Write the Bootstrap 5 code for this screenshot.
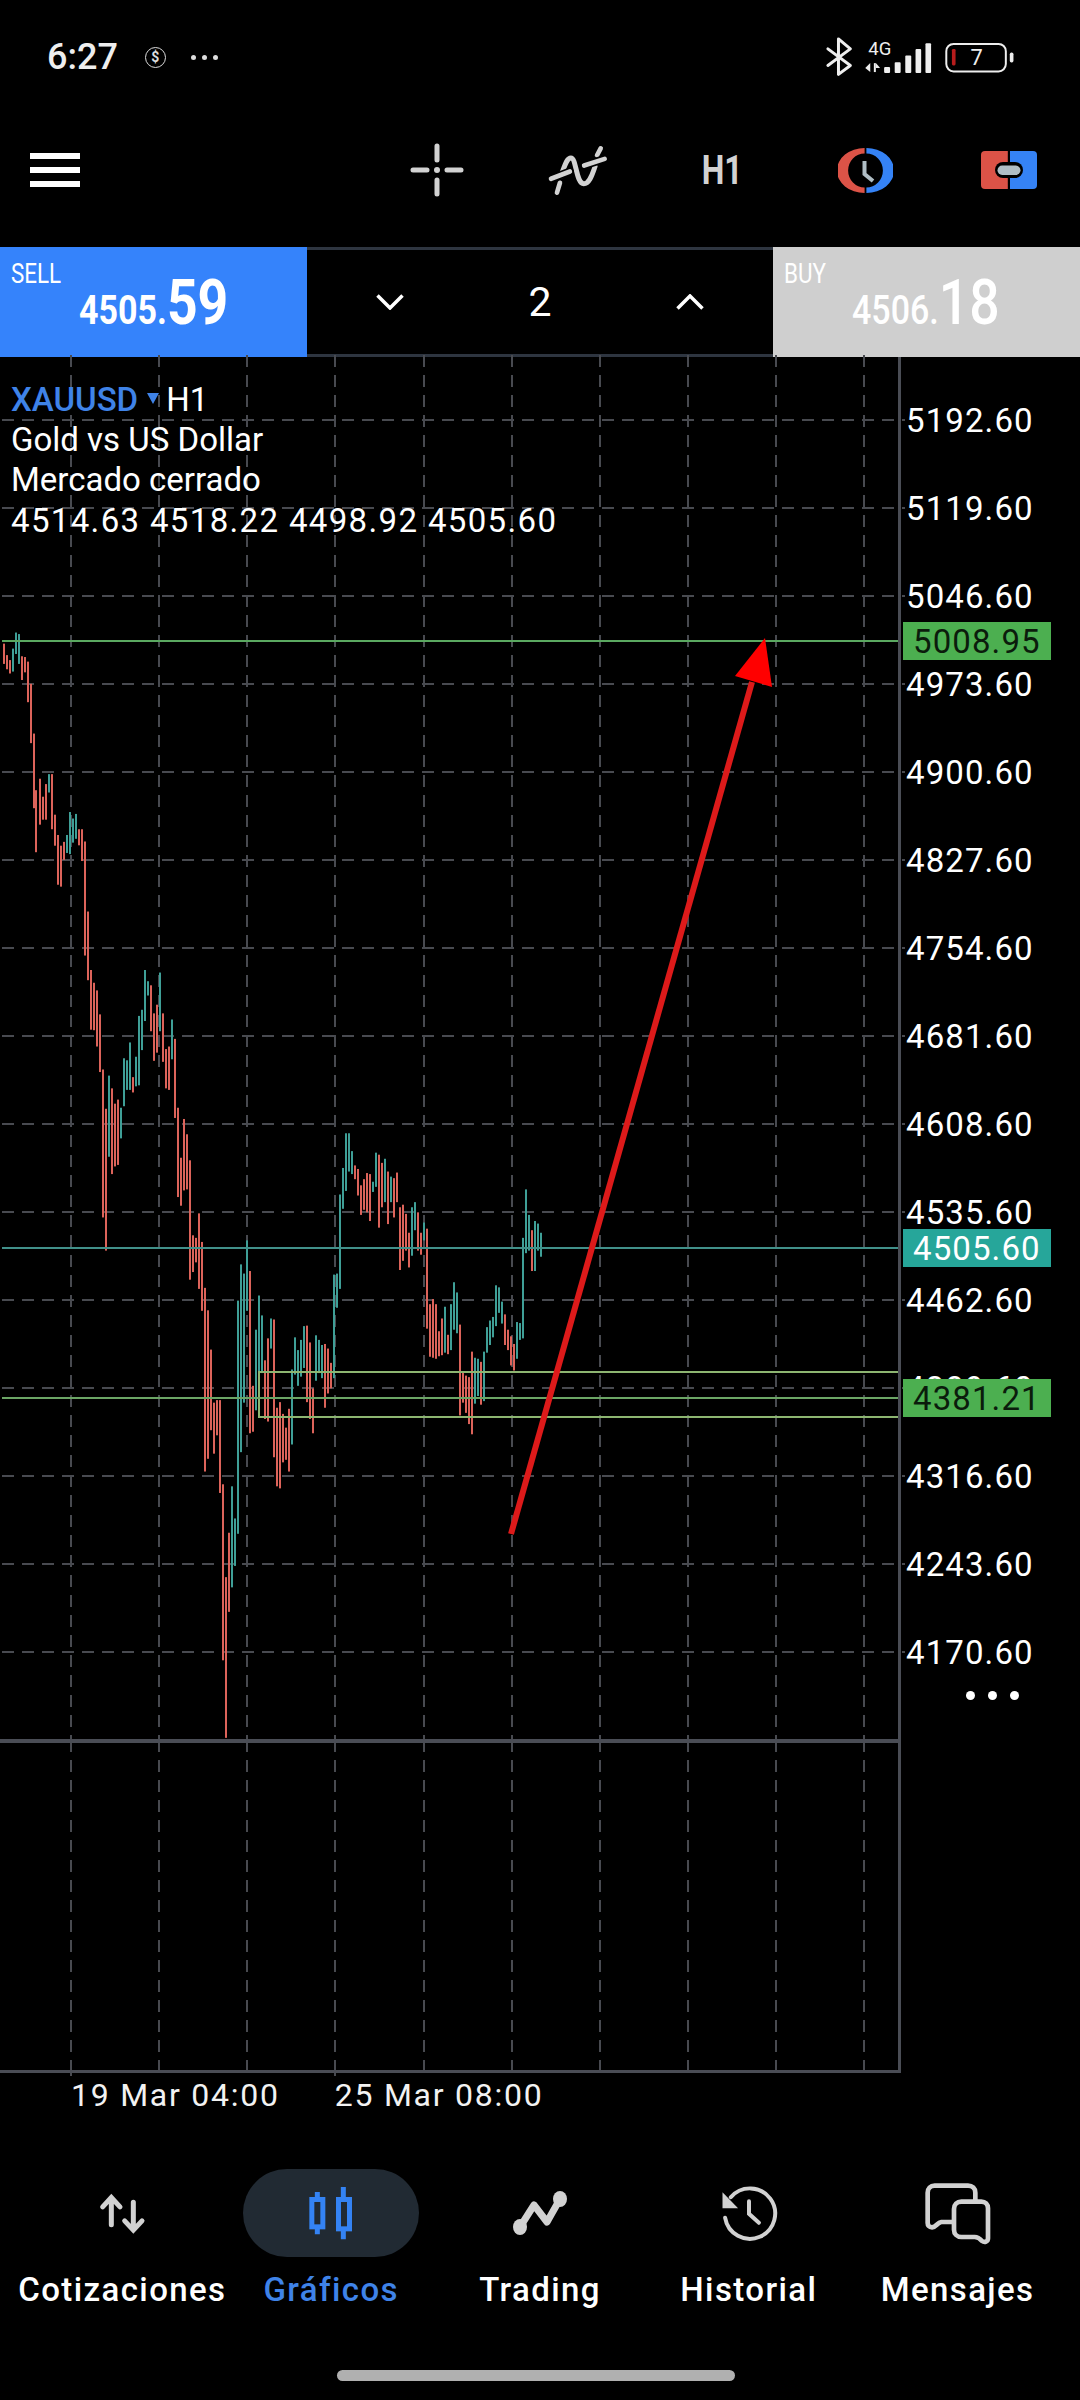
<!DOCTYPE html>
<html lang="es">
<head>
  <meta charset="UTF-8" />
  <meta name="viewport" content="width=device-width, initial-scale=1.0" />
  <title>XAUUSD H1</title>
  <link href="https://cdn.jsdelivr.net/npm/bootstrap@5.3.3/dist/css/bootstrap.min.css" rel="stylesheet" />
  <style>
    html, body { background: #000; }
    body { width: 1080px; height: 2400px; overflow: hidden; font-family: Roboto, "Liberation Sans", sans-serif; color: #fff; }

    /* status bar */
    .status-row { height: 93px; padding: 21px 63px 0 47px; }
    .clock-text { font-size: 36px; font-weight: 500; line-height: 1; color: #eee; }
    .coin { width: 21px; height: 21px; margin-left: 27px; border: 1.5px solid #ddd; border-radius: 50%; font-size: 14px; font-weight: 700; line-height: 1; color: #ddd; }
    .status-dots { gap: 6px; margin-left: 25px; }
    .status-dots span { width: 5px; height: 5px; border-radius: 50%; background: #ddd; }

    /* toolbar */
    .tool-row { height: 154px; padding-left: 30px; }
    .burger { width: 50px; gap: 8px; }
    .burger span { height: 6px; background: #fff; }
    .tool-slot { width: 143px; }
    .tf-text { font-size: 41px; font-weight: 700; line-height: 1; color: #d2d2d2; transform: scaleX(.78); }

    /* sell / buy strip */
    .trade-row { height: 110px; }
    .side-box { width: 307px; padding: 13px 0 0 11px; color: #fff; }
    .side-sell { background: #3583fb; }
    .side-buy { background: #cfcfcf; }
    .side-name { font-size: 28px; line-height: 28px; transform: scaleX(.8); transform-origin: left; }
    .side-price { height: 62px; line-height: 62px; font-weight: 700; white-space: nowrap; transform: scaleX(.85); transform-origin: left; margin-left: 68px; margin-top: -16px; }
    .side-buy .side-price { font-weight: 500; }
    .side-price small { font-size: 40px; font-weight: inherit; }
    .side-price b { font-size: 63px; font-weight: inherit; }
    .lot-box { border-top: 3px solid #2e3540; border-bottom: 3px solid #2e3540; padding: 0 8px; }
    .lot-box > div { width: 150px; }
    .lot-num { font-size: 41px; line-height: 1; }

    /* chart */
    .chart-row { height: 1716px; }
    .plot-area { width: 900px; }
    .plot-svg { left: 0; top: 0; width: 905px; height: 1722px; overflow: visible; }
    .symbol-info { left: 11px; top: 23px; font-size: 33px; line-height: 40.2px; white-space: nowrap; }
    .symbol-name { color: #3f83e8; font-weight: 500; }
    .symbol-caret { width: 0; height: 0; border-left: 6px solid transparent; border-right: 6px solid transparent; border-top: 11px solid #3f83e8; margin: 0 7px 4px 9px; }
    .ohlc-text { letter-spacing: 1.35px; }
    .price-axis { width: 180px; padding: 20px 0 0 6px; }
    .axis-label { height: 88px; line-height: 88px; font-size: 33px; letter-spacing: 1.1px; }
    .price-tag { left: 3px; width: 148px; height: 38px; line-height: 40px; padding-left: 10px; font-size: 33px; letter-spacing: 1.1px; }
    .tag-green { background: #4caf50; color: #0b1c0c; }
    .tag-teal { background: #26a69a; color: #fff; }
    .more-dots { left: 66px; top: 1334px; gap: 13px; }
    .more-dots span { width: 9px; height: 9px; border-radius: 50%; background: #fff; }

    /* time axis */
    .time-row { height: 96px; padding: 2px 0 0 71px; gap: 55px; font-size: 32px; line-height: 40px; letter-spacing: 1.75px; color: #f2f2f2; }

    /* bottom tabs */
    .tab-row { height: 201px; padding: 0 18px; }
    .tab-item { width: 208.8px; }
    .tab-icon { height: 88px; width: 176px; border-radius: 44px; }
    .tab-icon.is-active { background: #212a33; }
    .tab-label { margin-top: 13px; font-size: 33px; line-height: 40px; font-weight: 500; letter-spacing: 1.4px; white-space: nowrap; }
    .tab-label.is-active { color: #3f83e8; }
    .home-wrap { padding-left: 337px; }
    .home-bar { width: 398px; height: 11px; border-radius: 6px; background: #b0b0b0; }
  </style>
</head>
<body class="bg-black">

  <!-- status bar -->
  <div class="status-row d-flex align-items-center">
    <span class="clock-text">6:27</span>
    <span class="coin d-flex align-items-center justify-content-center">$</span>
    <span class="status-dots d-flex"><span></span><span></span><span></span></span>
    <svg class="ms-auto" width="193" height="43" viewBox="190 46 580 130">
      <path d="M200 85 268 135 232 162V55L268 85 200 135" fill="none" stroke="#eee" stroke-width="9" stroke-linejoin="round" stroke-linecap="round"/>
      <text x="322" y="104" font-family="Roboto" font-size="56" fill="#eee">4G</text>
      <polygon points="313,143 328,128 328,155" fill="#eee"/>
      <rect x="339" y="128" width="6" height="27" fill="#eee"/>
      <polygon points="345,128 358,143 345,143" fill="#eee"/>
      <rect x="370" y="140" width="18" height="18" rx="3" fill="#eee"/>
      <rect x="402" y="125" width="18" height="33" rx="3" fill="#eee"/>
      <rect x="434" y="105" width="18" height="53" rx="3" fill="#eee"/>
      <rect x="465" y="85" width="17" height="73" rx="3" fill="#eee"/>
      <rect x="495" y="68" width="17" height="90" rx="3" fill="#eee"/>
      <rect x="558" y="70" width="180" height="83" rx="22" fill="none" stroke="#eee" stroke-width="6"/>
      <rect x="750" y="96" width="11" height="30" rx="5" fill="#eee"/>
      <rect x="575" y="85" width="11" height="50" rx="4" fill="#b71c1c"/>
      <text x="650" y="135" font-family="Roboto" font-size="66" fill="#eee" text-anchor="middle">7</text>
    </svg>
  </div>

  <!-- toolbar -->
  <div class="tool-row d-flex align-items-center">
    <div class="burger d-flex flex-column"><span></span><span></span><span></span></div>
    <div class="d-flex ms-auto align-items-center">
      <div class="tool-slot d-flex justify-content-center">
        <svg width="56" height="56" viewBox="-28 -28 56 56" stroke="#d2d2d2" stroke-width="5" stroke-linecap="round">
          <path d="M0-24V-10M0 10V24M-24 0H-10M10 0H24"/>
          <circle r="3" fill="#d2d2d2" stroke="none"/>
        </svg>
      </div>
      <div class="tool-slot d-flex justify-content-center">
        <svg width="63" height="53" viewBox="474 100 190 160" fill="none" stroke-linecap="round">
          <path d="M512 198C525 165 530 142 543 142 560 142 558 220 582 220 600 220 608 190 616 168" stroke="#d2d2d2" stroke-width="15"/>
          <path d="M501 247 510 217M622 134 633 113" stroke="#d2d2d2" stroke-width="14"/>
          <path d="M483 205 540 183M583 165 645 145" stroke="#000" stroke-width="24"/>
          <path d="M483 205 540 183M583 165 645 145" stroke="#d2d2d2" stroke-width="14"/>
        </svg>
      </div>
      <div class="tool-slot d-flex justify-content-center"><span class="tf-text">H1</span></div>
      <div class="tool-slot d-flex justify-content-center">
        <svg width="55" height="45" viewBox="0 0 55 45">
          <path d="M26.6 0A27.6 22.4 0 0 0 26.6 45V39.6A16.4 17 0 0 1 26.6 5.4Z" fill="#dc5347"/>
          <path d="M28.4 0A27.6 22.4 0 0 1 28.4 45V39.6A16.4 17 0 0 0 28.4 5.4Z" fill="#3583f6"/>
          <path d="M26.5 13V26L35 33" fill="none" stroke="#b0bec5" stroke-width="4"/>
        </svg>
      </div>
      <div class="tool-slot d-flex justify-content-center">
        <svg width="56" height="38" viewBox="0 0 56 38">
          <path d="M4 0H26.800V38H4A4 4 0 0 1 0 34V4A4 4 0 0 1 4 0Z" fill="#dc5347"/>
          <path d="M29 0H52A4 4 0 0 1 56 4V34A4 4 0 0 1 52 38H29Z" fill="#3583f6"/>
          <rect x="14" y="11" width="28" height="16" rx="8" fill="#000"/>
          <rect x="16.500" y="14.500" width="23" height="9.500" rx="4.700" fill="#b0bec5"/>
        </svg>
      </div>
    </div>
  </div>

  <!-- sell / lot / buy -->
  <div class="trade-row d-flex">
    <div class="side-box side-sell">
      <div class="side-name">SELL</div>
      <div class="side-price"><small>4505.</small><b>59</b></div>
    </div>
    <div class="lot-box flex-fill d-flex align-items-center">
      <div class="d-flex justify-content-center">
        <svg width="28" height="16" viewBox="0 0 28 16" fill="none" stroke="#fff" stroke-width="3.500"><path d="M1.500 1.500 14 14 26.500 1.500"/></svg>
      </div>
      <div class="d-flex justify-content-center"><span class="lot-num">2</span></div>
      <div class="d-flex justify-content-center">
        <svg width="28" height="16" viewBox="0 0 28 16" fill="none" stroke="#fff" stroke-width="3.500"><path d="M1.500 14.500 14 2 26.500 14.500"/></svg>
      </div>
    </div>
    <div class="side-box side-buy">
      <div class="side-name">BUY</div>
      <div class="side-price"><small>4506.</small><b>18</b></div>
    </div>
  </div>

  <!-- chart -->
  <div class="chart-row d-flex">
    <div class="plot-area position-relative">
      <svg id="plot" class="plot-svg position-absolute" viewBox="0 357 905 1722"></svg>
      <div class="symbol-info position-absolute">
        <div class="d-flex align-items-center"><span class="symbol-name">XAUUSD</span><span class="symbol-caret"></span><span>H1</span></div>
        <div>Gold vs US Dollar</div>
        <div>Mercado cerrado</div>
        <div class="ohlc-text">4514.63 4518.22 4498.92 4505.60</div>
      </div>
    </div>
    <div class="price-axis position-relative" id="axis">
      <div class="price-tag tag-green position-absolute" style="top:265px">5008.95</div>
      <div class="price-tag tag-teal position-absolute" style="top:872px">4505.60</div>
      <div class="price-tag tag-green position-absolute" style="top:1022px">4381.21</div>
      <div class="more-dots d-flex position-absolute"><span></span><span></span><span></span></div>
    </div>
  </div>

  <div class="time-row d-flex">
    <span>19 Mar 04:00</span>
    <span>25 Mar 08:00</span>
  </div>

  <!-- bottom tabs -->
  <div class="tab-row d-flex">
    <div class="tab-item d-flex flex-column align-items-center">
      <div class="tab-icon d-flex align-items-center justify-content-center">
        <svg width="50" height="47" viewBox="110 90 150 140" fill="none" stroke="#d2d2d2" stroke-width="15" stroke-linecap="round" stroke-linejoin="miter">
          <path d="M153 194V114M127 140 153 112 179 140"/>
          <path d="M219 126V206M193 182 219 210 245 182"/>
        </svg>
      </div>
      <div class="tab-label">Cotizaciones</div>
    </div>
    <div class="tab-item d-flex flex-column align-items-center">
      <div class="tab-icon is-active d-flex align-items-center justify-content-center">
        <svg width="50" height="55" viewBox="740 80 150 165" fill="none" stroke="#3483f4" stroke-width="15">
          <rect x="757.500" y="120.500" width="33" height="82"/>
          <rect x="837.500" y="120.500" width="33" height="88"/>
          <path d="M774 98V120M774 203V225M852 83V120M852 209V240"/>
        </svg>
      </div>
      <div class="tab-label is-active">Gráficos</div>
    </div>
    <div class="tab-item d-flex flex-column align-items-center">
      <div class="tab-icon d-flex align-items-center justify-content-center">
        <svg width="54" height="44" viewBox="0 0 54 44" fill="#d2d2d2">
          <path d="M7 36 21 14 34 31 47 8" fill="none" stroke="#d2d2d2" stroke-width="7" stroke-linecap="round" stroke-linejoin="round"/>
          <ellipse cx="47" cy="8" rx="7" ry="8"/>
          <ellipse cx="7" cy="36" rx="7" ry="8"/>
        </svg>
      </div>
      <div class="tab-label">Trading</div>
    </div>
    <div class="tab-item d-flex flex-column align-items-center">
      <div class="tab-icon d-flex align-items-center justify-content-center">
        <svg width="60" height="58" viewBox="115 70 180 175" fill="none" stroke="#d2d2d2" stroke-width="12" stroke-linecap="round">
          <path d="M133 172A76 76 0 1 0 150 110"/>
          <path d="M205 122V160L235 187"/>
          <polygon points="125,95 125,143 172,143" fill="#d2d2d2" stroke="none"/>
        </svg>
      </div>
      <div class="tab-label">Historial</div>
    </div>
    <div class="tab-item d-flex flex-column align-items-center">
      <div class="tab-icon d-flex align-items-center justify-content-center">
        <svg width="70" height="65" viewBox="730 60 210 195" fill="none" stroke="#d2d2d2" stroke-width="14" stroke-linejoin="round">
          <path d="M822 183H785C772 185 770 198 757 199 748 199 744 193 744 186V95C744 82 752 74 765 74H865C878 74 887 82 887 95V122"/>
          <path d="M845 122H905C917 122 925 130 925 142V232C925 242 915 246 907 240 900 232 895 228 885 228H845C832 228 823 219 823 206V144C823 131 832 122 845 122Z"/>
        </svg>
      </div>
      <div class="tab-label">Mensajes</div>
    </div>
  </div>

  <div class="home-wrap d-flex"><div class="home-bar" id="homeBar"></div></div>

  <script src="https://cdn.jsdelivr.net/npm/bootstrap@5.3.3/dist/js/bootstrap.bundle.min.js"></script>
  <script>
    // price axis labels, one every 88px
    const axis = document.getElementById("axis");
    const prices = ["5192.60","5119.60","5046.60","4973.60","4900.60","4827.60","4754.60","4681.60","4608.60","4535.60","4462.60","4389.60","4316.60","4243.60","4170.60"];
    prices.reverse().forEach((p) => {
      const row = document.createElement("div");
      row.className = "axis-label";
      row.textContent = p;
      axis.insertBefore(row, axis.firstChild);
    });

    // candles, read off the picture as "x top bottom"
    const RED = "#dc635a", TEAL = "#3f9f97";
    const partA = "r10 715 768,r19 745 782,r27 758 793,t36 728 788,t44 686 742,t52 690 768,r61 748 810,r69 750 790,r77 762 868,r86 820 975,r94 950 1145,r102 1098 1260,r111 1068 1188,r119 1115 1175,r128 1082 1175,t136 1056 1104,r145 1056 1200,r153 1162 1243,r162 1215 1345,r170 1243 1350,r178 1233 1280,t187 1215 1262,t195 1155 1265,t204 1172 1235,t212 1160 1225,r221 1200 1242,r229 1200 1283,r238 1232 1530,r246 1415 1568";
    const partB = "r231 0 20,r238 0 117,r246 25 118,r254 40 150,r262 87 200,r269 195 485,r277 272 550,t285 207 366,r293 232 400,r300 262 385,r308 254 382,t316 270 330,t324 173 267,t332 177 235,t339 142 235,r347 210 240,t355 170 228,t363 90 226,t371 78 157,t379 0 100,t387 22 50,r395 30 120,r403 85 178,r410 68 162,t417 5 120,r425 85 180,r433 155 232,r441 150 235,t449 97 175,r457 135 290,r465 270 445,r472 368 462,r480 292 432,r488 322 430,r496 373 607,r504 520 592,r512 525 573,r520 477 625,r527 533 668,r535 623 983,r543 667 958,r551 744 902,r559 848 948,r566 843 912,r574 843 1025,r582 1008 1353,r590 1190 1505,r598 1103 1258,t606 1012 1210,t614 1075 1168,t622 648 1105,t630 577 945,t638 595 848,t646 530 668,r653 590 908,r661 815 905,t669 705 863,t677 638 810,t684 677 790,r692 765 880,r700 722 885,t708 683 742,r716 685 955,r724 858 1012,r732 847 1016,r740 870 965,r748 897 960,r755 860 983,t763 783 930,t771 720 793,t779 745 815,t787 725 797,t795 698 780,r803 697 847,r811 730 880,r818 820 908,t826 716 805,t834 725 790,t842 735 800,r850 733 858,r858 742 830,r866 770 820,t873 597 800,t881 595 662,t888 440 625,t896 388 468,t904 320 433,t912 320 395,t920 355 400,r928 383 410,r935 390 442,r943 422 480,r951 410 470,r959 398 475,r967 400 492,t975 415 435,t983 358 425,r991 362 505,r998 378 465,t1006 370 455,r1014 395 498,t1022 405 455,r1030 408 485,r1037 397 455,r1045 465 588,r1053 460 570,r1061 478 550,r1069 515 583,t1077 465 560,t1084 455 510,r1092 475 550,r1100 515 558,t1107 495 530,r1115 507 703,r1123 655 758,r1131 645 760,r1139 655 762,r1147 708 757,r1155 683 755,t1163 660 750,r1171 715 753,t1179 655 745,t1187 612 705,t1194 632 712,r1202 695 873,r1210 788 848,r1218 795 868,r1226 798 890,r1234 748 910,t1241 760 850,t1249 762 835,r1257 768 852,t1265 748 845,t1273 700 750,t1281 687 735,t1289 680 720,t1297 618 698,t1304 622 672,t1312 650 693,r1320 675 735,r1328 705 745,r1336 718 775,r1343 733 785,t1351 690 762,t1359 692 725,t1367 525 722,t1374 430 555,t1382 480 550,r1390 510 590,t1398 492 590,t1406 497 550,t1413 515 562";

    let svg = "";
    const DASH = "#484a50";

    // vertical grid, the bit below the main pane too
    for (let x = 71; x < 898; x += 88.15) {
      const gx = Math.round(x);
      svg += `<line x1="${gx}" x2="${gx}" y1="355" y2="1739" stroke="${DASH}" stroke-width="2" stroke-dasharray="12 8"/>`;
      svg += `<line x1="${gx}" x2="${gx}" y1="1743" y2="2071" stroke="${DASH}" stroke-width="2" stroke-dasharray="12 8" stroke-dashoffset="3"/>`;
    }
    // horizontal grid
    for (let y = 420; y < 1700; y += 88) {
      svg += `<line x1="2" x2="905" y1="${y}" y2="${y}" stroke="${DASH}" stroke-width="2" stroke-dasharray="12 8"/>`;
    }

    const addCandles = (data, sx, sy, y0) => {
      data.split(",").forEach((c) => {
        const color = c[0] === "r" ? RED : TEAL;
        const [x, top, bottom] = c.slice(1).split(" ").map(Number);
        const px = Math.round(x / sx), y1 = top / sy + y0, y2 = bottom / sy + y0;
        svg += `<rect x="${px - 1}" y="${y1}" width="2" height="${y2 - y1}" fill="${color}"/>`;
      });
    };
    addCandles(partA, 2.8, 2.613, 370);
    addCandles(partB, 2.613, 1.96, 970);

    // level lines
    svg += `<path d="M898 1372H259V1417H898" fill="none" stroke="#8db571" stroke-width="2"/>`;
    svg += `<line x1="2" x2="898" y1="641" y2="641" stroke="#5aa860" stroke-width="2"/>`;
    svg += `<line x1="2" x2="898" y1="1248" y2="1248" stroke="#41908a" stroke-width="2"/>`;
    svg += `<line x1="2" x2="898" y1="1398" y2="1398" stroke="#6ba565" stroke-width="2"/>`;

    // pane borders
    svg += `<rect x="0" y="1739" width="898" height="4" fill="#4a4d55"/>`;
    svg += `<rect x="0" y="2070" width="901" height="3" fill="#4a4d55"/>`;
    svg += `<rect x="898" y="357" width="3" height="1716" fill="#4a4d55"/>`;
    svg += `<path d="M71 2073V2076M335 2073V2076" stroke="${DASH}" stroke-width="2"/>`;

    // the hand drawn arrow
    svg += `<line x1="511" y1="1534" x2="752" y2="682" stroke="#dd1a1a" stroke-width="6"/>`;
    svg += `<polygon points="765,638 735,676 772,687" fill="#ff0000"/>`;

    document.getElementById("plot").innerHTML = svg;
  </script>
</body>
</html>
